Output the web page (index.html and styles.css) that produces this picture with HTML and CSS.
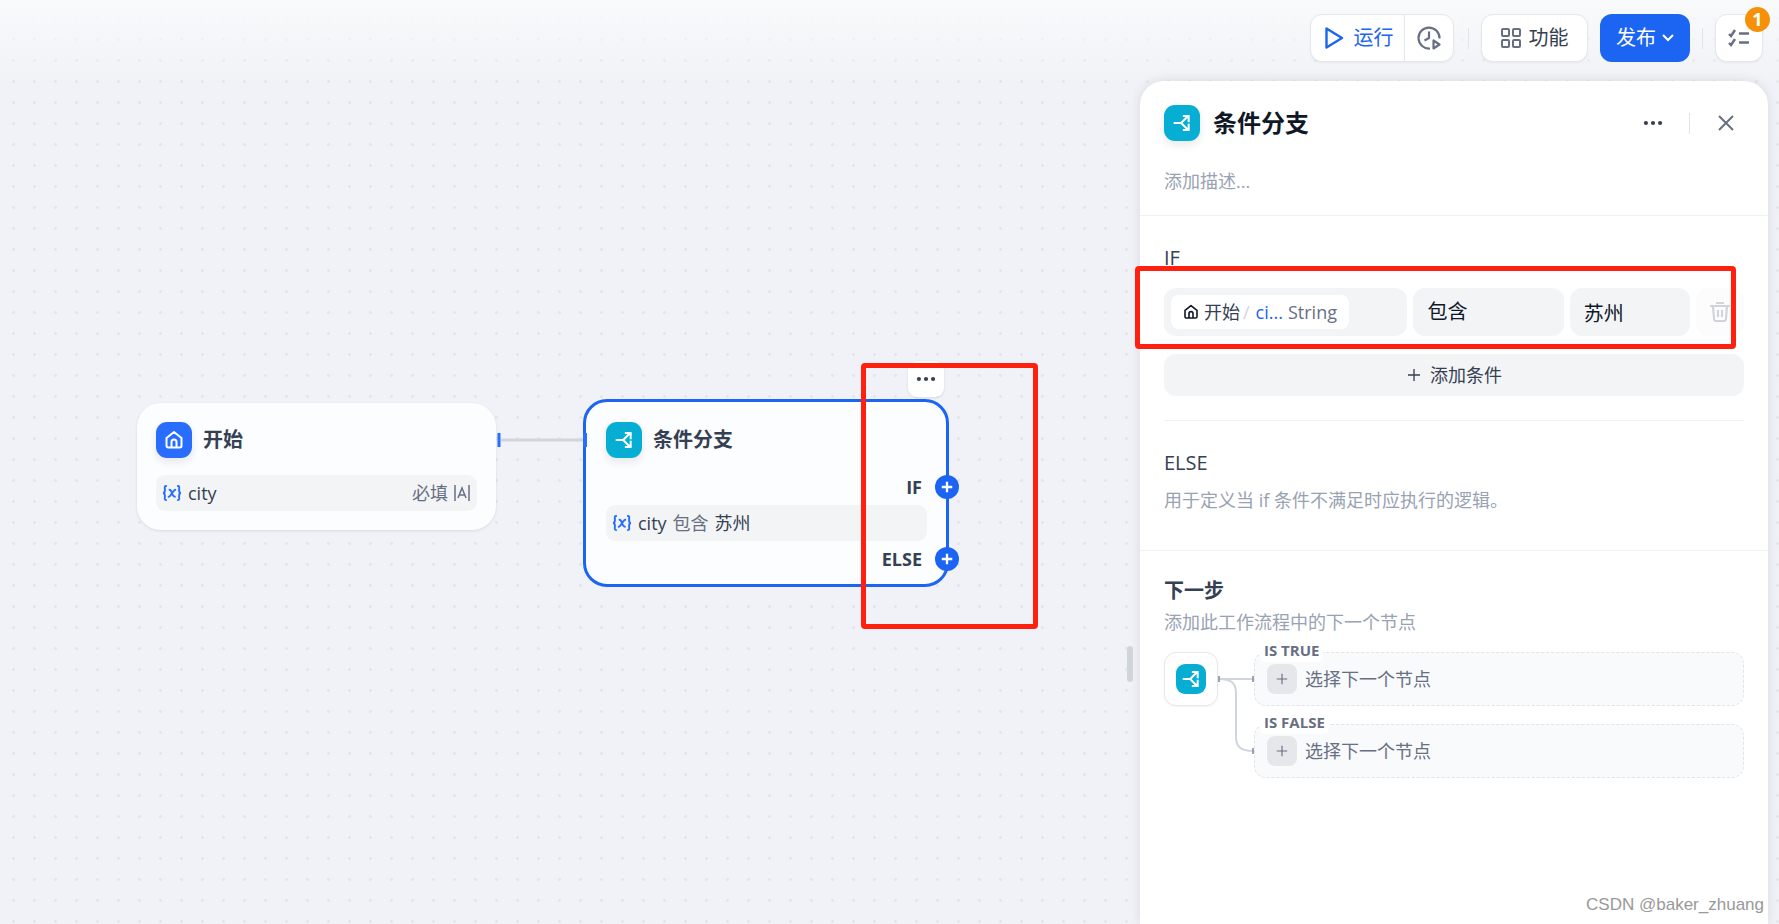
FILE: index.html
```html
<!DOCTYPE html>
<html lang="zh-CN">
<head>
<meta charset="utf-8">
<title>条件分支</title>
<link rel="stylesheet" href="styles.css">
</head>
<body>
<svg class="defs" width="0" height="0" aria-hidden="true">
  <symbol id="i-branch" viewBox="0 0 24 24"><path d="M2 12h9L18.500 4.500M11 12l7.500 7.500M13 3.500H20V11M20 13v7.500h-7" fill="none" stroke="currentColor" stroke-width="2.400"/></symbol>
  <symbol id="i-home" viewBox="0 0 24 24"><path d="M3 9.500 12 2.500l9 7V19a2 2 0 0 1-2 2H5a2 2 0 0 1-2-2zM9 21v-6.500a3 3 0 0 1 6 0V21" fill="none" stroke="currentColor" stroke-width="2.400" stroke-linejoin="round"/></symbol>
  <symbol id="i-plus" viewBox="0 0 24 24"><path d="M12 3v18M3 12h18" fill="none" stroke="currentColor"/></symbol>
  <symbol id="i-more" viewBox="0 0 24 24"><g fill="currentColor"><circle cx="3.500" cy="12" r="2.500"/><circle cx="12" cy="12" r="2.500"/><circle cx="20.500" cy="12" r="2.500"/></g></symbol>
  <symbol id="i-var" viewBox="0 0 24 20"><g fill="none" stroke="currentColor" stroke-width="2.300" stroke-linecap="round"><path d="M5 1.500C2.500 1.500 3.500 4 3.500 6.500 3.500 8.500 3 10 1.200 10c1.800 0 2.300 1.500 2.300 3.500 0 2.500-1 5 1.500 5M19 1.500c2.500 0 1.500 2.500 1.500 5 0 2 .5 3.500 2.300 3.500-1.800 0-2.300 1.500-2.300 3.500 0 2.500 1 5-1.500 5"/><path d="M8 14.500c2.500 0 5.500-8.500 8-8.500M9 6c3.500 0 2.500 8.500 6.500 8.500"/></g></symbol>
</svg>
<main class="workspace">
  <section class="canvas">
    <svg class="edge" viewBox="0 0 92 14" aria-hidden="true"><path d="M4 7h84" stroke="#d0d5dc" stroke-width="3"/><path d="M2 0v14" stroke="#296dff" stroke-width="3"/></svg>
    <article class="node node-start">
      <header class="node-head"><span class="tile blue"><svg><use href="#i-home"/></svg></span><h2>开始</h2></header>
      <div class="node-row"><svg class="var"><use href="#i-var"/></svg><span class="grow">city</span><span class="muted">必填</span>
        <svg class="text-type" viewBox="0 0 16 16" fill="none" stroke="#676f83" stroke-width="1.500"><path d="M1 0v16M15 0v16M4 13l4-10 4 10M5.500 10h5"/></svg></div>
    </article>
    <article class="node node-if">
      <span class="port"></span>
      <button class="node-more" aria-label="更多"><svg><use href="#i-more"/></svg></button>
      <header class="node-head"><span class="tile cyan"><svg><use href="#i-branch"/></svg></span><h2>条件分支</h2></header>
      <div class="case">IF<button class="add" aria-label="添加节点"><svg><use href="#i-plus"/></svg></button></div>
      <div class="node-row"><svg class="var"><use href="#i-var"/></svg><span>city</span><span class="muted">包含</span><span>苏州</span></div>
      <div class="case">ELSE<button class="add" aria-label="添加节点"><svg><use href="#i-plus"/></svg></button></div>
    </article>
  </section>
  <div class="top-fade"></div>
  <nav class="toolbar">
    <div class="group">
      <button class="run"><svg viewBox="0 0 24 24"><path d="M4.500 2.500v19L20 12z" fill="none" stroke="currentColor" stroke-width="2.400" stroke-linejoin="round"/></svg>运行</button>
      <button class="history" aria-label="运行历史"><svg viewBox="0 0 24 24" fill="none" stroke="currentColor" stroke-width="2.200"><path d="M13 22.500A10.500 10.500 0 1 1 22.500 12.500"/><path d="M12 5.500V12l-4.500 2.500M16.500 14.500v8l6-4z" stroke-linejoin="round"/></svg></button>
    </div>
    <span class="bar"></span>
    <button class="features"><svg viewBox="0 0 20 20" fill="none" stroke="#676f83" stroke-width="2"><rect x="1" y="1" width="7" height="7" rx="1"/><rect x="12" y="1" width="7" height="7" rx="1"/><rect x="1" y="12" width="7" height="7" rx="1"/><rect x="12" y="12" width="7" height="7" rx="1"/></svg>功能</button>
    <button class="publish">发布<svg viewBox="0 0 12 8"><path d="m1 1 5 5 5-5" fill="none" stroke="currentColor" stroke-width="2"/></svg></button>
    <span class="bar"></span>
    <button class="checklist" aria-label="检查清单"><svg viewBox="0 0 22 18" fill="none" stroke="#676f83" stroke-width="2.400"><path d="M11 4.500h10M11 13.500h10M1 5l2 2 4-6M1 14l2 2 4-6"/></svg><span class="badge">1</span></button>
  </nav>
  <aside class="panel">
    <span class="grip"></span>
    <section class="panel-head">
      <div class="title-line"><span class="tile cyan"><svg><use href="#i-branch"/></svg></span><h1>条件分支</h1>
        <button class="icon-button" aria-label="更多"><svg><use href="#i-more"/></svg></button><span class="bar"></span>
        <button class="icon-button close" aria-label="关闭"><svg viewBox="0 0 16 16"><path d="m1 1 14 14M15 1 1 15" stroke="currentColor" stroke-width="2"/></svg></button></div>
      <input class="description" placeholder="添加描述..." aria-label="描述">
    </section>
    <section class="conditions">
      <h3>IF</h3>
      <div class="condition">
        <button class="field variable"><span class="chip"><svg><use href="#i-home"/></svg><span>开始</span><i>/</i><b>ci...</b><em>String</em></span></button>
        <button class="field">包含</button>
        <input class="field" value="苏州" aria-label="值">
        <button class="delete" aria-label="删除"><svg viewBox="0 0 20 20" fill="none" stroke="currentColor" stroke-width="2.200"><path d="M0 4h20M6 1h8M3 4l1 13q0 2 2 2h8q2 0 2-2l1-13M8 8v7M12 8v7"/></svg></button>
      </div>
      <button class="add-condition"><svg><use href="#i-plus"/></svg>添加条件</button>
      <hr>
      <h3>ELSE</h3>
      <p>用于定义当 if 条件不满足时应执行的逻辑。</p>
    </section>
    <section class="next">
      <h4>下一步</h4>
      <p>添加此工作流程中的下一个节点</p>
      <div class="flow">
        <div class="origin"><span class="tile small cyan"><svg><use href="#i-branch"/></svg></span></div>
        <svg class="links" viewBox="0 0 36 126" fill="none" stroke="#d0d5dc" stroke-width="2"><path d="M1 27h34M1 27c12 0 17 4 17 14v44c0 10 5 14 17 14"/><path d="M1 24v6M35 24v6M35 96v6" stroke="#98a2b2"/></svg>
        <div class="targets">
          <button class="target"><span class="label">IS TRUE</span><span class="plus"><svg><use href="#i-plus"/></svg></span>选择下一个节点</button>
          <button class="target"><span class="label">IS FALSE</span><span class="plus"><svg><use href="#i-plus"/></svg></span>选择下一个节点</button>
        </div>
      </div>
    </section>
  </aside>
  <div class="mark mark-outputs"></div>
  <div class="mark mark-condition"></div>
  <div class="watermark">CSDN @baker_zhuang</div>
</main>
</body>
</html>
```
FILE: styles.css
```css
* { box-sizing: border-box; }
body { margin: 0; font: 400 18px/24px "Open Sans", "Noto Sans CJK SC", sans-serif; color: #354052; }
h1, h2, h3, h4, p { margin: 0; }
button, input { font: inherit; color: inherit; border: 0; margin: 0; padding: 0; background: none; }
button { cursor: pointer; }
svg { display: block; flex: none; }
.defs { position: absolute; }
.workspace { position: relative; min-height: 100vh; display: flex; flex-direction: column; align-items: flex-end; background: #f0f2f7 radial-gradient(circle, #e3e5e9 1px, #e3e5e9 1px, transparent 2px) 3px 8px / 21px 21px; overflow: hidden; }
.canvas { position: absolute; inset: 0; }
.top-fade { position: absolute; inset: 0 0 auto 0; height: 84px; background: linear-gradient(#f9fafb, #f9fafb00); }

.tile { width: 36px; height: 36px; border-radius: 11px; display: grid; place-items: center; color: #fff; flex: none; box-shadow: 0 4px 8px #10182818; }
.tile svg { width: 20px; height: 20px; }
.tile.small { width: 30px; height: 30px; border-radius: 9px; box-shadow: none; }
.blue { background: #296dff; }
.cyan { background: #06aed4; }

.node { position: absolute; background: #fcfdff; border-radius: 24px; padding: 19px; }
.node-start { left: 137px; top: 403px; width: 359px; box-shadow: 0 1px 3px #1018281a; }
.node-if { left: 583px; top: 399px; width: 366px; padding: 20px 19px 7px 20px; border: 3px solid #1c64f2; }
.node-head { display: flex; align-items: center; gap: 11px; margin-bottom: 17px; }
.node-head h2 { font-size: 20px; line-height: 28px; font-weight: 700; }
.node-row { display: flex; align-items: center; gap: 6px; height: 36px; border-radius: 9px; padding: 0 7px 0 6px; background: #f2f4f6; }
.node-if .node-head { margin-bottom: 11px; }
.var { width: 20px; height: 18px; color: #296dff; }
.text-type { width: 16px; height: 16px; }
.grow { flex: 1; }
.muted { color: #676f83; }
.case { position: relative; height: 36px; display: flex; align-items: center; justify-content: flex-end; padding-right: 5px; font-weight: 700; }
.add { position: absolute; right: -32px; width: 24px; height: 24px; border-radius: 50%; background: #1c64f2; color: #fff; display: grid; place-items: center; }
.add svg { width: 14px; height: 14px; stroke-width: 4; }
.port { position: absolute; left: -3px; top: 31px; width: 4px; height: 14px; background: #296dff; }
.node-more { position: absolute; right: 2px; top: -41px; width: 36px; height: 36px; border-radius: 9px; background: #fff; display: grid; place-items: center; box-shadow: 0 1px 3px #1018281a; }
.node-more svg, .icon-button svg { width: 20px; height: 20px; }
.edge { position: absolute; left: 497px; top: 433px; width: 92px; height: 14px; }

.toolbar { position: relative; display: flex; align-items: center; gap: 12px; padding: 14px 16px 0 0; height: 62px; font-size: 20px; }
.toolbar button { height: 48px; display: flex; align-items: center; justify-content: center; }
.toolbar .group, .toolbar .features, .toolbar .checklist { background: #fff; border: 1px solid #e5e7eb; border-radius: 12px; box-shadow: 0 1px 2px #1018280d; }
.group { display: flex; height: 48px; margin-right: 2px; }
.toolbar .group button { height: 46px; }
.run { width: 93px; gap: 8px; color: #1c64f2; }
.history { width: 49px; color: #676f83; }
.toolbar .history { border-left: 1px solid #e5e7eb; }
.run svg, .history svg { width: 24px; height: 24px; }
.bar { width: 1px; height: 21px; background: #e0e3e8; }
.features { width: 107px; gap: 8px; }
.features svg { width: 20px; height: 20px; }
.toolbar .publish { width: 90px; gap: 6px; border-radius: 12px; background: #1c64f2; color: #fff; }
.publish svg { width: 12px; height: 8px; }
.checklist { position: relative; width: 48px; }
.checklist svg { width: 22px; height: 18px; }
.badge { position: absolute; right: -8px; top: -8px; width: 25px; height: 25px; border-radius: 50%; background: #f79009; color: #fff; font-size: 18px; line-height: 25px; font-weight: 700; }

.panel { position: relative; width: 628px; flex: 1; margin: 19px 11px 0 0; background: #fff; border-radius: 24px 24px 0 0; box-shadow: 0 0 12px #1018281a; }
.grip { position: absolute; left: -13px; top: 565px; width: 6px; height: 36px; border-radius: 3px; background: #d0d5dc; }
.panel-head { padding: 24px 24px 19px; border-bottom: 1px solid #f0f1f3; }
.title-line { display: flex; align-items: center; }
h1 { flex: 1; margin-left: 13px; font-size: 24px; line-height: 36px; color: #101828; }
.icon-button { width: 36px; height: 36px; display: grid; place-items: center; }
.title-line .bar { margin: 0 18px; }
.icon-button.close svg { width: 16px; height: 16px; color: #676f83; }
.description { display: block; width: 100%; height: 30px; margin-top: 25px; }
.description::placeholder { color: #98a2b2; opacity: 1; }
.conditions { padding: 27px 24px 37px; border-bottom: 1px solid #f0f1f3; }
h3 { font-size: 20px; line-height: 30px; font-weight: 400; }
.condition { display: grid; grid-template-columns: 243fr 150fr 120fr 48px; gap: 6px; margin-top: 15px; }
.field { height: 48px; border-radius: 12px; background: #f2f4f6; color: #101828; font-size: 20px; text-align: left; padding: 0 14px; min-width: 0; }
.variable { padding: 0 7px; }
.delete { width: 48px; height: 48px; border-radius: 12px; background: #fcfcfd; display: grid; place-items: center; color: #d0d5dc; }
.delete svg { width: 20px; height: 20px; }
.chip { display: flex; align-items: center; width: 178px; height: 34px; border-radius: 8px; padding-left: 12px; background: #fff; font-size: 18px; color: #354052; }
.chip svg { width: 16px; height: 18px; margin-right: 5px; color: #101828; }
.chip i { font-style: normal; color: #d0d5dc; margin: 0 6px 0 3px; }
.chip b { font-weight: 400; color: #1c64f2; margin-right: 5px; }
.chip em { font-style: normal; color: #676f83; }
.add-condition { width: 100%; height: 42px; margin-top: 18px; border-radius: 12px; background: #f2f4f6; display: flex; align-items: center; justify-content: center; gap: 8px; }
.add-condition svg { width: 16px; height: 16px; stroke-width: 2; }
hr { border: 0; height: 1px; margin: 24px 0 27px; background: #f0f1f3; }
.conditions p { margin-top: 10px; padding-bottom: 1px; color: #98a2b2; }
.next { padding: 25px 24px; }
h4 { font-size: 20px; line-height: 30px; }
.next p { margin-top: 4px; color: #98a2b2; }
.flow { display: flex; margin-top: 18px; }
.origin { width: 54px; height: 54px; border: 1px solid #e5e7eb; border-radius: 12px; display: grid; place-items: center; box-shadow: 0 1px 2px #1018280d; }
.links { width: 36px; height: 126px; }
.targets { flex: 1; display: grid; gap: 18px; }
.target { position: relative; height: 54px; display: flex; align-items: center; gap: 8px; padding-left: 12px; border: 1px dashed #e0e3e8; border-radius: 12px; background: #f9fafb; color: #676f83; }
.label { position: absolute; left: 5px; top: -15px; height: 24px; padding: 0 4px; border-radius: 6px; background: #fff; font-size: 15px; font-weight: 700; }
.plus { width: 30px; height: 30px; border-radius: 8px; background: #e5e7eb; display: grid; place-items: center; }
.plus svg { width: 14px; height: 14px; stroke-width: 2; }

.mark { position: absolute; border: 5px solid #ff2010; border-radius: 4px; pointer-events: none; }
.mark-outputs { left: 861px; top: 363px; width: 177px; height: 266px; }
.mark-condition { right: 43px; top: 266px; width: 601px; height: 83px; }
.watermark { position: absolute; right: 15px; bottom: 7px; font-family: "Liberation Sans", sans-serif; font-weight: 400; color: #999; font-size: 17px; }
```
